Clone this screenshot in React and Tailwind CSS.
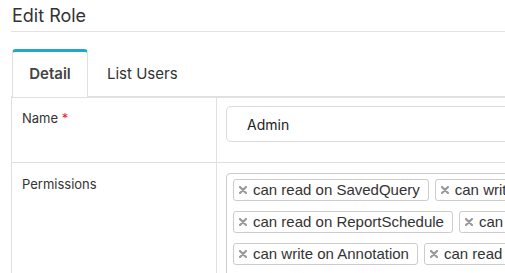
import React from 'react'

const tagRows = [
  ['can read on SavedQuery', 'can write on SavedQuery', 'can read on CssTemplate'],
  ['can read on ReportSchedule', 'can write on ReportSchedule', 'can read on Chart'],
  ['can write on Annotation', 'can read on Annotation', 'can read on Dataset'],
  ['can write on Dataset', 'can read on Log', 'can write on Log'],
]

const Tag = ({ label }) => (
  <span className="flex items-center h-[22px] border border-[#cccccc] rounded-[3px] pl-[5px] pr-[8px] whitespace-nowrap font-['Liberation_Sans',Arial,sans-serif] text-[15px] text-[#333333]">
    <svg width="8" height="8" viewBox="0 0 8 8" className="mr-[6px] shrink-0">
      <path d="M1 1 L7 7 M7 1 L1 7" stroke="#999999" strokeWidth="2.2" strokeLinecap="round" />
    </svg>
    {label}
  </span>
)

const App = () => {
  return (
    <div className="w-full h-[273px] overflow-hidden bg-white font-['Inter',sans-serif] text-[#333333]">
      <div className="w-[1100px] pl-[11px]">
        {/* Header */}
        <div className="pt-[4px] pb-[3px] border-b border-[#e3e3e3]">
          <h1 className="text-[18px] leading-6 pl-[1px]">Edit Role</h1>
        </div>

        {/* Tabs */}
        <div className="flex mt-[17px] border-b border-[#e0e0e0]">
          <div className="ml-[1px] w-[76px] h-[48px] -mb-px bg-white border-t-[3px] border-t-[#20a7c9] border-x border-x-[#e0e0e0] rounded-t-[4px] flex items-center justify-center text-[15px] font-semibold text-[#444444]">
            Detail
          </div>
          <div className="h-[47px] px-[19px] flex items-center text-[15px] text-[#333333] pt-[4px]">
            List Users
          </div>
        </div>

        {/* Table */}
        <div className="border-l border-t border-[#e0e0e0]">
          <div className="flex border-b border-[#e0e0e0]">
            <div className="w-[205px] shrink-0 border-r border-[#e0e0e0] pl-[10px] pt-[10px] text-[13px] leading-5">
              Name <span className="text-[#e8222a]">*</span>
            </div>
            <div className="flex-1 pl-[9px] pt-[8px] pb-[20px]">
              <div className="h-[36px] border border-[#dcdcdc] rounded-[5px] pl-[20px] flex items-center text-[14px] text-[#222222]">
                Admin
              </div>
            </div>
          </div>
          <div className="flex">
            <div className="w-[205px] shrink-0 border-r border-[#e0e0e0] pl-[10px] pt-[11px] text-[13px] leading-5">
              Permissions
            </div>
            <div className="flex-1 pl-[9px] pt-[10px]">
              <div className="border border-[#cccccc] rounded-[4px] pl-[6px] pt-[5px] pb-[6px] flex flex-col gap-[10px]">
                {tagRows.map((row, i) => (
                  <div key={i} className="flex gap-[6px]">
                    {row.map(t => (
                      <Tag key={t} label={t} />
                    ))}
                  </div>
                ))}
              </div>
            </div>
          </div>
        </div>
      </div>
    </div>
  )
}

export default App
